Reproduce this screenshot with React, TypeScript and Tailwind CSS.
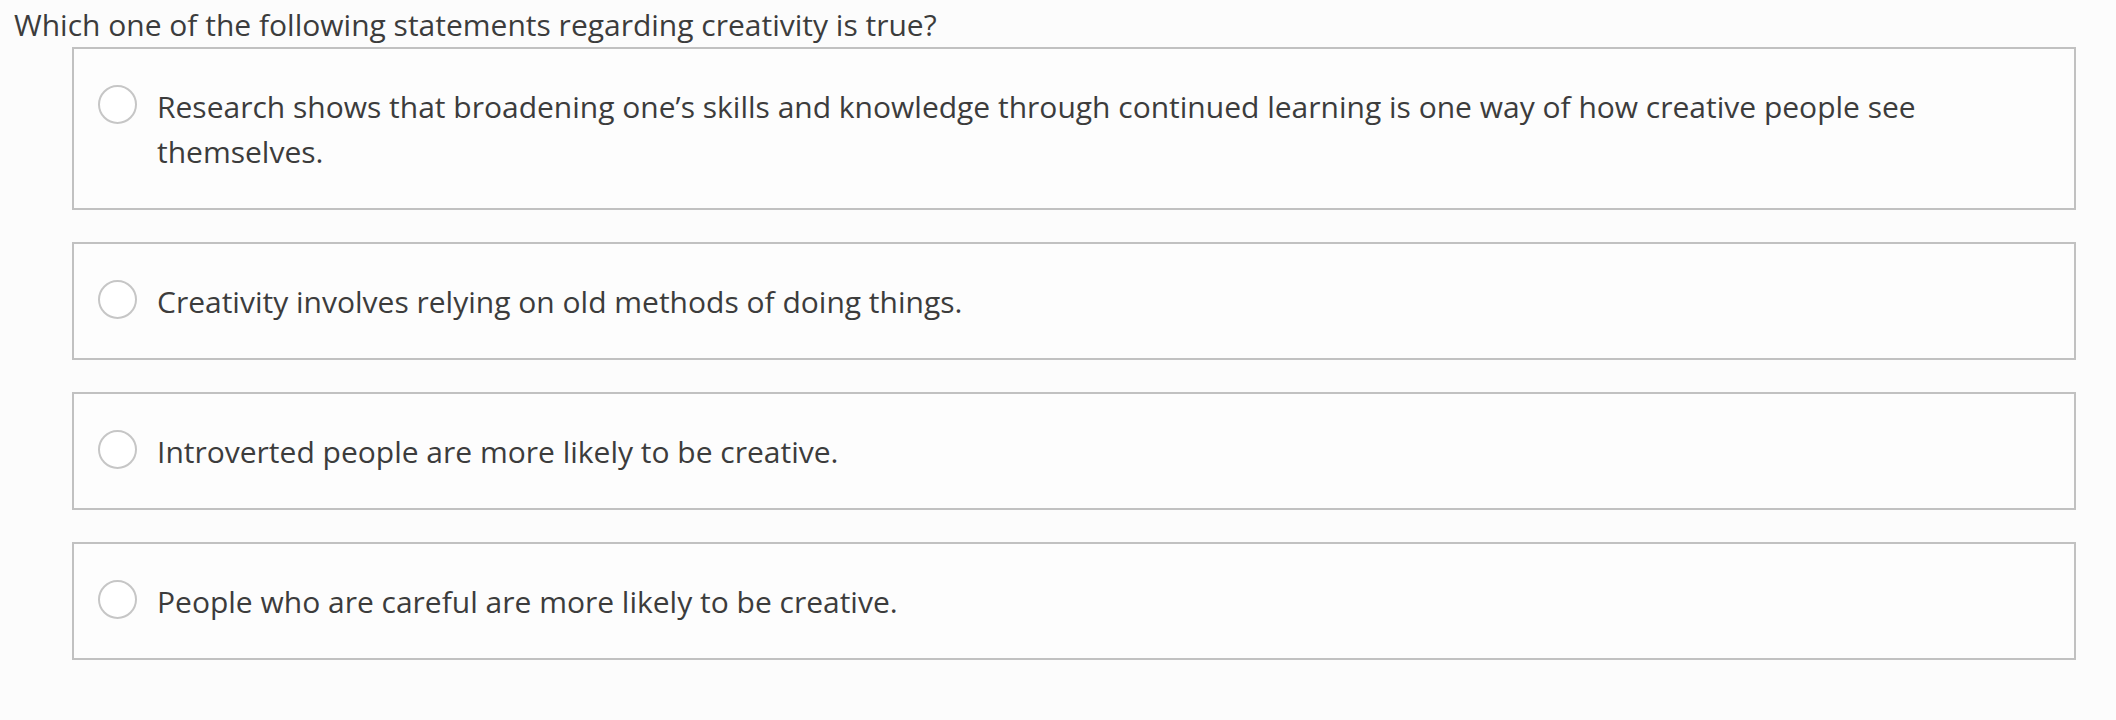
const options = [
  "Research shows that broadening one’s skills and knowledge through continued learning is one way of how creative people see themselves.",
  "Creativity involves relying on old methods of doing things.",
  "Introverted people are more likely to be creative.",
  "People who are careful are more likely to be creative.",
];

const Option = ({ text }: { text: string }) => (
  <label className="flex items-start border-2 border-[#c1c1c1] bg-[#fdfdfd] pt-[35px] pb-[34px] pl-[24px] pr-[40px]">
    <span className="mt-[1px] h-[39px] w-[39px] shrink-0 rounded-full border-2 border-[#c6c6c6] bg-white" />
    <span className="ml-[20px] text-[30px] leading-[45px] text-[#3c3c3c]">{text}</span>
  </label>
);

export default function App() {
  return (
    <div
      className="min-h-[720px] w-full bg-[#fcfcfc]"
      style={{ fontFamily: '"Open Sans", "Noto Sans", sans-serif' }}
    >
      <p className="pl-[14px] pt-[3px] text-[30px] leading-[44px] text-[#3c3c3c]">
        Which one of the following statements regarding creativity is true?
      </p>
      <div className="ml-[72px] mr-[40px] flex flex-col gap-[32px]">
        {options.map((o) => (
          <Option key={o} text={o} />
        ))}
      </div>
    </div>
  );
}
